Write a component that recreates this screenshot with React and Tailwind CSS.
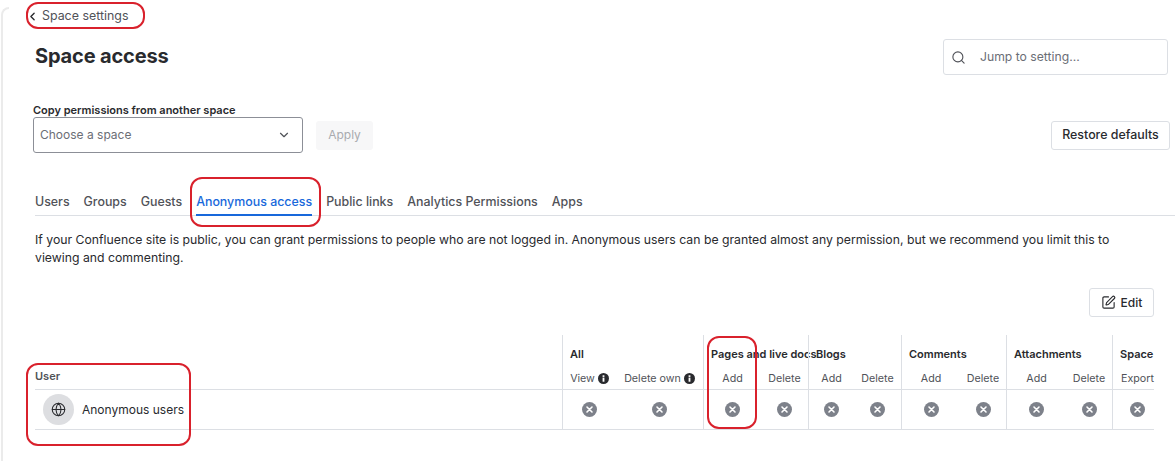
import React from "react";
import { ChevronLeft, ChevronDown, Search, Globe, SquarePen } from "lucide-react";

const tabs = ["Users", "Groups", "Guests", "Anonymous access", "Public links", "Analytics Permissions", "Apps"];

const groups = [
  { name: "All", span: "col-span-2" },
  { name: "Pages and live docs", span: "col-span-2" },
  { name: "Blogs", span: "col-span-2" },
  { name: "Comments", span: "col-span-2" },
  { name: "Attachments", span: "col-span-2" },
  { name: "Space", span: "col-span-1" },
];

const columns = [
  { label: "View", info: true, line: true },
  { label: "Delete own", info: true },
  { label: "Add", line: true },
  { label: "Delete" },
  { label: "Add", line: true },
  { label: "Delete" },
  { label: "Add", line: true },
  { label: "Delete" },
  { label: "Add", line: true },
  { label: "Delete" },
  { label: "Export", line: true, last: true },
];

const gridCols = "grid grid-cols-[527px_54px_87px_58px_47px_46px_47px_59px_46px_60px_46px_42px]";

const InfoDot = () => (
  <svg width="11" height="11" viewBox="0 0 12 12" className="ml-[3px] shrink-0">
    <circle cx="6" cy="6" r="6" fill="#292a2e" />
    <rect x="5" y="5" width="2" height="4.5" fill="#fff" />
    <rect x="5" y="2.5" width="2" height="1.8" fill="#fff" />
  </svg>
);

const CrossDot = () => (
  <svg width="15" height="15" viewBox="0 0 15 15">
    <circle cx="7.5" cy="7.5" r="7.5" fill="#7d818a" />
    <path d="M5 5l5 5M10 5l-5 5" stroke="#fff" strokeWidth="1.6" strokeLinecap="round" />
  </svg>
);

const Callout = ({ className }) => (
  <div className={`absolute rounded-xl border-2 border-[#d9212c] pointer-events-none ${className}`}></div>
);

export default function App() {
  return (
    <div className="relative h-[461px] w-[1176px] overflow-hidden bg-white font-['Inter',sans-serif] text-[#292a2e]">
      {/* page frame */}
      <div className="h-full pl-px pt-[7px]">
        <div className="h-full w-2 rounded-tl-lg border-l-2 border-t-2 border-[#ebebeb]"></div>
      </div>

      <div className="absolute inset-0 pl-[35px] pr-[6px]">
        {/* breadcrumb */}
        <div className="-ml-[6px] flex h-[32px] items-center gap-[3px] text-[12.4px] text-[#505258]">
          <ChevronLeft size={13} strokeWidth={2.5} className="-ml-[3px] text-[#292a2e]" />
          <span>Space settings</span>
        </div>

        {/* title row */}
        <div className="flex items-start justify-between">
          <h1 className="mt-[8px] text-[20px] leading-[32px] font-bold tracking-[-0.15px]">Space access</h1>
          <div className="mr-[2px] mt-[7px] flex h-[36px] w-[225px] items-center rounded-[3px] border border-[#dcdfe4] pl-[7px] text-[12.2px] text-[#6b6e76]">
            <Search size={15} strokeWidth={1.8} className="text-[#505258]" />
            <span className="ml-[14px]">Jump to setting...</span>
          </div>
        </div>

        {/* copy permissions */}
        <div className="mt-[28px] flex items-end justify-between">
          <div className="-ml-[2px]">
            <div className="text-[11px] leading-[14px] font-semibold">Copy permissions from another space</div>
            <div className="flex items-center">
              <div className="flex h-[36px] w-[270px] items-center justify-between rounded-[3px] border border-[#8c8f97] pl-[6px] pr-[11px] text-[12px] text-[#6b6e76]">
                <span>Choose a space</span>
                <ChevronDown size={14} strokeWidth={2} className="text-[#505258]" />
              </div>
              <div className="ml-[13px] flex h-[29px] w-[57px] items-center justify-center rounded-[3px] bg-[#f7f7f8] text-[12px] text-[#a9abaf]">
                Apply
              </div>
            </div>
          </div>
          <div className="mb-[3px] flex h-[29px] w-[119px] items-center justify-center rounded-[3px] border border-[#dcdfe4] text-[12.4px] font-medium">
            Restore defaults
          </div>
        </div>

        {/* tabs */}
        <div className="-mr-[5px] mt-[32px] flex gap-[14px] border-b border-[#dcdfe4] text-[12.4px] font-medium text-[#505258]">
          {tabs.map((t) => (
            <div
              key={t}
              className={
                t === "Anonymous access"
                  ? "-mb-px h-[31px] border-b-2 border-[#1868db] pt-[8px] text-[#1868db]"
                  : "h-[30px] pt-[8px]"
              }
            >
              {t}
            </div>
          ))}
        </div>

        <p className="mt-[15px] w-[1100px] text-[12.26px] leading-[18px]">
          If your Confluence site is public, you can grant permissions to people who are not logged in. Anonymous users can be granted almost any permission, but we recommend you limit this to viewing and commenting.
        </p>

        <div className="mt-[21px] flex w-[1119px] justify-end">
          <div className="flex h-[29px] w-[65px] items-center justify-center gap-[5px] rounded-[3px] border border-[#dcdfe4] text-[12px] font-medium">
            <SquarePen size={15} strokeWidth={1.8} />
            Edit
          </div>
        </div>

        {/* permissions table */}
        <div className={`${gridCols} mt-[18px] w-[1119px] text-[10.7px]`}>
          <div className="row-span-2 flex items-end border-b border-[#dcdfe4] pb-[5px] text-[11px] font-semibold text-[#505258]">User</div>
          {groups.map((g) => (
            <div
              key={g.name}
              className={`${g.span} h-[34px] whitespace-nowrap border-l border-[#dcdfe4] pl-[7px] pt-[11px] text-[11px] font-semibold`}
            >
              {g.name}
            </div>
          ))}
          {columns.map((c, i) => (
            <div
              key={i}
              className={`${c.line ? "border-l border-[#dcdfe4]" : ""} ${c.last ? "pl-[8px]" : ""} flex h-[21px] items-start justify-center whitespace-nowrap border-b border-[#dcdfe4] pt-[2px] text-[#505258]`}
            >
              {c.label}
              {c.info && <span className="mt-[2px]"><InfoDot /></span>}
            </div>
          ))}
          <div className="flex h-[40px] items-center gap-[8px] border-b border-[#dcdfe4] pl-[8px] text-[12px]">
            <div className="flex h-[31px] w-[31px] items-center justify-center rounded-full bg-[#dddee1]">
              <Globe size={15} strokeWidth={1.7} />
            </div>
            Anonymous users
          </div>
          {columns.map((c, i) => (
            <div
              key={i}
              className={`${c.line ? "border-l border-[#dcdfe4]" : ""} ${c.last ? "pl-[8px]" : ""} flex h-[40px] items-center justify-center border-b border-[#dcdfe4]`}
            >
              <CrossDot />
            </div>
          ))}
        </div>
      </div>

      {/* red callouts drawn over the screenshot */}
      <Callout className="left-[26px] top-[2px] h-[27px] w-[119px]" />
      <Callout className="left-[190px] top-[177px] h-[50px] w-[131px]" />
      <Callout className="left-[26px] top-[363px] h-[83px] w-[165px]" />
      <Callout className="left-[707px] top-[336px] h-[93px] w-[50px]" />
    </div>
  );
}
